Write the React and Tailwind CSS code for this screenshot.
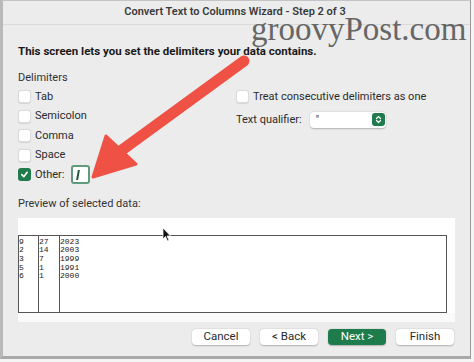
import React from "react";

const rows = [
  ["9", "27", "2023"],
  ["2", "14", "2003"],
  ["3", "7", "1999"],
  ["5", "1", "1991"],
  ["6", "1", "2000"],
];

function Box({ checked }) {
  return checked ? (
    <span className="w-[13px] h-[13px] rounded-[3px] bg-[#217a4b] flex items-center justify-center">
      <svg width="9" height="9" viewBox="0 0 10 10">
        <path d="M2 5.2 L4.2 7.4 L8 2.6" fill="none" stroke="#fff" strokeWidth="1.8" strokeLinecap="round" strokeLinejoin="round" />
      </svg>
    </span>
  ) : (
    <span className="w-[13px] h-[13px] rounded-[3px] bg-white border border-[#dcdcdc] shadow-[0_0.5px_1px_rgba(0,0,0,0.1)]" />
  );
}

function Check({ label, checked, children }) {
  return (
    <div className="flex items-center gap-[4px] h-[19.5px]">
      <Box checked={checked} />
      <span>{label}</span>
      {children}
    </div>
  );
}

function Btn({ label, primary }) {
  return (
    <button
      className={`w-[58px] h-[16px] rounded-[4px] text-[11.5px] leading-none shadow-[0_0.5px_1.5px_rgba(0,0,0,0.25)] ${
        primary ? "bg-[#1e7b4c] text-white" : "bg-white text-[#2a2a2a]"
      }`}
    >
      {label}
    </button>
  );
}

export default function App() {
  return (
    <div className="w-[474px] h-[362px] bg-[#f4f4f4] overflow-hidden" style={{ fontFamily: "Roboto, 'Liberation Sans', sans-serif" }}>
      <div className="relative w-[471px] h-[359px] bg-[#ececec] border-l-[3px] border-b-[3px] border-r border-t border-l-[#b9b9b9] border-b-[#a9a9a9] border-r-[#9a9a9a] border-t-[#c4c4c4] text-[11px] text-[#2b2b2b]">
        <div className="h-[24px] flex items-center justify-center border-b border-[#d9d9d9] text-[11px] font-semibold text-[#3a3a3a] pr-[3px]">
          Convert Text to Columns Wizard - Step 2 of 3
        </div>
        <div className="px-[15px]">
          <div className="mt-[19px] font-bold text-[11.5px] leading-[14px] text-[#1a1a1a]">
            This screen lets you set the delimiters your data contains.
          </div>
          <div className="flex mt-[11px]">
            <div className="w-[218px]">
              <div className="h-[18px] flex items-center text-[#333]">Delimiters</div>
              <div>
                <Check label="Tab" />
                <Check label="Semicolon" />
                <Check label="Comma" />
                <Check label="Space" />
                <Check label="Other:" checked>
                  <span className="ml-[3px] w-[19px] h-[19px] rounded-[3px] border-[2px] border-[#5f9c7c] bg-white flex items-center pl-[4px]">
                    <span className="w-[2px] h-[10px] bg-[#1d5a3a] skew-x-[-10deg]" />
                  </span>
                </Check>
              </div>
            </div>
            <div className="pt-[18px]">
              <Check label="Treat consecutive delimiters as one" />
              <div className="flex items-center gap-[8px] mt-[5px]">
                <span>Text qualifier:</span>
                <div className="w-[76px] h-[16px] bg-white rounded-[4px] shadow-[0_0.5px_1.5px_rgba(0,0,0,0.25)] flex items-center justify-between pl-[6px] pr-[1px]">
                  <span className="text-[10px] leading-none">"</span>
                  <span className="w-[13px] h-[13px] rounded-[3px] bg-[#1e7b4c] flex items-center justify-center">
                    <svg width="7" height="9" viewBox="0 0 7 9">
                      <path d="M1.5 3.5 L3.5 1.5 L5.5 3.5 M1.5 5.5 L3.5 7.5 L5.5 5.5" fill="none" stroke="#fff" strokeWidth="1.2" strokeLinecap="round" strokeLinejoin="round" />
                    </svg>
                  </span>
                </div>
              </div>
            </div>
          </div>
          <div className="mt-[12px] h-[14px] leading-[14px] text-[#333]">Preview of selected data:</div>
          <div className="mt-[7px] w-[437px] h-[104px] bg-white flex flex-col">
            <div className="h-[17px] mr-[8px]" />
            <div className="h-[78px] mr-[8px] border border-[#555] flex text-[8px] leading-[8.7px] text-[#222]" style={{ fontFamily: "'Liberation Mono', monospace" }}>
              <div className="w-[20px] border-r border-[#555] pt-[2px]">
                {rows.map((r) => <div key={r[2]}>{r[0]}</div>)}
              </div>
              <div className="w-[21px] border-r border-[#555] pt-[2px]">
                {rows.map((r) => <div key={r[2]}>{r[1]}</div>)}
              </div>
              <div className="pt-[2px]">
                {rows.map((r) => <div key={r[2]}>{r[2]}</div>)}
              </div>
            </div>
            <div className="flex-1 bg-[#fafafa]" />
          </div>
          <div className="flex justify-end gap-[10px] mt-[7px] mr-[1px]">
            <Btn label="Cancel" />
            <Btn label="< Back" />
            <Btn label="Next >" primary />
            <Btn label="Finish" />
          </div>
        </div>

        <div
          className="absolute left-[248px] top-[12px] text-[33px] leading-none text-[#666] pointer-events-none"
          style={{ fontFamily: "'Liberation Serif', serif" }}
        >
          groovyPost.com
        </div>

        <svg className="absolute left-0 top-0 pointer-events-none" width="471" height="359" viewBox="0 0 471 359">
          <g transform="translate(-3,-1)">
            <line x1="244" y1="61" x2="122" y2="150" stroke="#ef5145" strokeWidth="11" strokeLinecap="round" />
            <path d="M93 177 L106 136 L136 164 Z" fill="#ef5145" stroke="#ef5145" strokeWidth="3" strokeLinejoin="round" />
          </g>
          <path d="M160 227 L160 238 L162.5 235.5 L164.5 240 L166 239.3 L164 235 L167.5 235 Z" fill="#111" stroke="#fff" strokeWidth="0.7" />
        </svg>
      </div>
    </div>
  );
}
